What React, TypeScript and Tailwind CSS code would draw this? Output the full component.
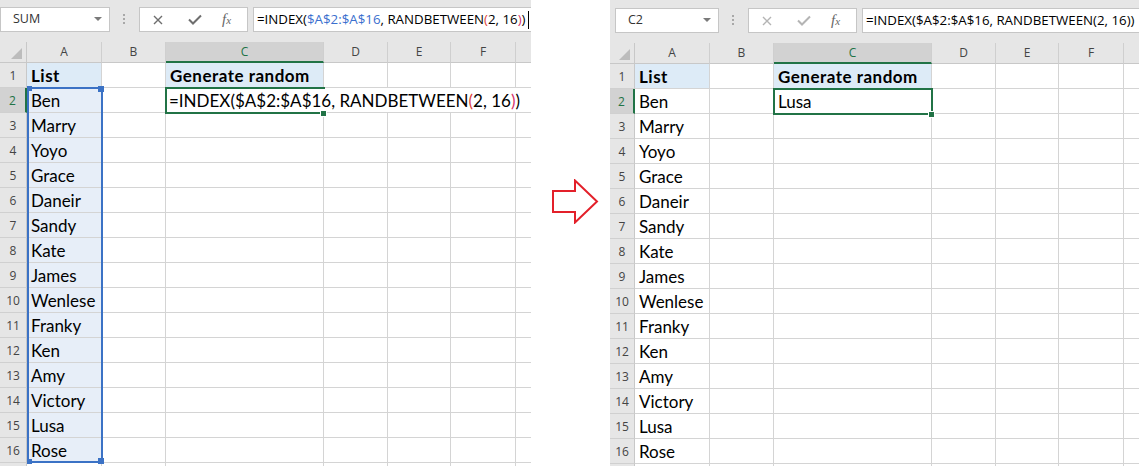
import React from "react";

const NAMES = [
  "Ben", "Marry", "Yoyo", "Grace", "Daneir", "Sandy", "Kate", "James",
  "Wenlese", "Franky", "Ken", "Amy", "Victory", "Lusa", "Rose",
];
const LETTERS = ["A", "B", "C", "D", "E", "F", "G"];

const cellFont = "font-['Lato',sans-serif]";
const uiFont = "font-['Open_Sans',sans-serif]";

function Toolbar({ right }: { right?: boolean }) {
  return (
    <div className={`h-[42px] shrink-0 flex items-start pt-[7px] ${right ? "pl-[5px]" : ""}`}>
      <div
        className={`${right ? "w-[104px]" : "w-[110px]"} shrink-0 h-[25px] bg-white border border-[#c6c6c6] flex items-center justify-between pl-[12px] pr-[7px] ${uiFont} text-[12.5px] text-[#333]`}
      >
        <span>{right ? "C2" : "SUM"}</span>
        <svg width="8" height="5" viewBox="0 0 8 5">
          <polygon points="0,0 8,0 4,4" fill="#7a7a7a" />
        </svg>
      </div>
      <div className="ml-[13px] mt-[7px] shrink-0 flex flex-col gap-[2px]">
        <div className="w-[2px] h-[2px] bg-[#a8a8a8]" />
        <div className="w-[2px] h-[2px] bg-[#a8a8a8]" />
        <div className="w-[2px] h-[2px] bg-[#a8a8a8]" />
      </div>
      <div className="ml-[14px] shrink-0 w-[109px] h-[25px] bg-white border border-[#c6c6c6] flex items-center">
        <svg className="ml-[13px]" width="10" height="10" viewBox="0 0 10 10">
          <path d="M1 1 L9 9 M9 1 L1 9" stroke={right ? "#b4b4b4" : "#6e6e6e"} strokeWidth="1.4" fill="none" />
        </svg>
        <svg className="ml-[25px]" width="14" height="11" viewBox="0 0 14 11">
          <path d="M1 5.5 L5 9.5 L13 1.5" stroke={right ? "#b4b4b4" : "#6e6e6e"} strokeWidth="2" fill="none" />
        </svg>
        <span className="ml-[20px] italic font-['Liberation_Serif',serif] text-[15px] text-[#666] leading-none">
          f<span className="text-[11px]">x</span>
        </span>
      </div>
      <div
        className={`ml-[5px] flex-1 min-w-0 h-[25px] bg-white border border-r-0 border-[#c6c6c6] flex items-center pl-[3px] whitespace-nowrap overflow-hidden ${uiFont} text-[13.3px] text-black`}
      >
        {right ? (
          <span>=INDEX($A$2:$A$16, RANDBETWEEN(2, 16))</span>
        ) : (
          <>
            <span>=INDEX(</span>
            <span className="text-[#3a6fce]">$A$2:$A$16</span>
            <span>, RANDBETWEEN</span>
            <span className="text-[#e0463b]">(</span>
            <span>2, 16</span>
            <span className="text-[#d6336c]">)</span>
            <span>)</span>
            <span className="inline-block w-px h-[18px] bg-black ml-[2px]" />
          </>
        )}
      </div>
    </div>
  );
}

function Panel({ right }: { right?: boolean }) {
  const widths = [
    right ? "w-[25px]" : "w-[27px]",
    "w-[75px]",
    "w-[64px]",
    "w-[158px]",
    "w-[64px]",
    "w-[63px]",
    "w-[65px]",
  ];
  const rows = Array.from({ length: 17 }, (_, i) => i + 1);
  const cOffset = right ? 163 : 165;

  return (
    <div
      className={`flex flex-col h-full shrink-0 overflow-hidden bg-[#e6e6e6] ${right ? "w-[529px] pt-px" : "w-[531px]"}`}
    >
      <Toolbar right={right} />
      <div className="relative flex-1 bg-white">
        {/* column header */}
        <div className={`flex h-[21px] bg-[#e6e6e6] ${uiFont} text-[12px] text-[#444]`}>
          <div className={`${widths[0]} shrink-0 h-full border-r border-b border-[#c8c8c8] flex items-start justify-end`}>
            <svg width="12" height="21" viewBox="0 0 12 21" className="mr-[3px]">
              <polygon points="11,6 11,17 0,17" fill="#bcbcbc" />
            </svg>
          </div>
          {LETTERS.map((l, i) => {
            const sel = l === "C";
            const last = i === LETTERS.length - 1;
            return (
              <div
                key={l}
                className={`${last ? "flex-1" : widths[i + 1]} shrink-0 h-full flex items-center justify-center ${
                  last ? "" : "border-r border-[#cfcfcf]"
                } ${sel ? "bg-[#d2d2d2] text-[#217346] border-b-2 border-b-[#217346]" : "border-b border-b-[#c8c8c8]"}`}
              >
                {last ? "" : l}
              </div>
            );
          })}
        </div>

        {rows.map((r) => {
          const sel = r === 2;
          return (
            <div key={r} className="flex h-[25px]">
              <div
                className={`${widths[0]} shrink-0 h-full flex items-center justify-center pt-[2px] ${uiFont} text-[12px] border-b border-[#d0d0d0] ${
                  sel
                    ? "bg-[#d2d2d2] text-[#217346] border-r-2 border-r-[#217346]"
                    : "bg-[#e6e6e6] text-[#444] border-r border-r-[#c8c8c8]"
                }`}
              >
                {r <= 16 ? r : ""}
              </div>
              {LETTERS.map((l, i) => {
                const last = i === LETTERS.length - 1;
                let text = "";
                let bold = false;
                let bg = "";
                if (r === 1 && l === "A") {
                  text = "List";
                  bold = true;
                  bg = "bg-[#ddebf7]";
                } else if (r === 1 && l === "C") {
                  text = "Generate random";
                  bold = true;
                  bg = "bg-[#ddebf7]";
                } else if (r >= 2 && r <= 16 && l === "A") {
                  text = NAMES[r - 2];
                  if (!right) bg = "bg-[#e7eef8]";
                } else if (right && r === 2 && l === "C") {
                  text = "Lusa";
                }
                return (
                  <div
                    key={l}
                    className={`${last ? "flex-1" : widths[i + 1]} shrink-0 h-full flex items-center pl-[4px] pt-[2px] whitespace-nowrap overflow-hidden border-b border-[#d4d4d4] ${
                      last ? "" : "border-r"
                    } ${bg} ${cellFont} text-[17px] text-black ${bold ? "font-bold tracking-[0.5px]" : ""}`}
                  >
                    {text}
                  </div>
                );
              })}
            </div>
          );
        })}

        {/* overlays */}
        {!right && (
          <>
            <div className="absolute left-[27px] top-[45px] w-[76px] h-[376px] border-2 border-[#3b72c5] z-10 pointer-events-none">
              <div className="absolute -left-[2px] -top-[3px] w-[5px] h-[5px] bg-[#3b72c5]" />
              <div className="absolute -right-[3px] -top-[3px] w-[6px] h-[6px] bg-[#3b72c5]" />
              <div className="absolute -left-[2px] -bottom-[3px] w-[5px] h-[5px] bg-[#3b72c5]" />
              <div className="absolute -right-[3px] -bottom-[3px] w-[6px] h-[6px] bg-[#3b72c5]" />
            </div>
            <div
              className={`absolute left-[167px] top-[46px] h-[24px] w-[349px] bg-white z-10 flex items-center pl-[2px] pt-[2px] whitespace-nowrap ${cellFont} text-[17px] text-black`}
            >
              <span>=INDEX($A$2:$A$16, RANDBETWEEN</span>
              <span className="text-[#e0463b]">(</span>
              <span>2, 16</span>
              <span className="text-[#d6336c]">)</span>
              <span>)</span>
            </div>
            <div
              className="absolute top-[45px] h-[27px] w-[160px] border-l-2 border-t-2 border-b-2 border-[#217346] z-20 pointer-events-none"
              style={{ left: cOffset }}
            />
          </>
        )}
        {right && (
          <div
            className="absolute top-[45px] h-[27px] w-[160px] border-2 border-[#217346] z-20 pointer-events-none"
            style={{ left: cOffset }}
          />
        )}
        <div
          className="absolute top-[68px] w-[7px] h-[7px] bg-[#217346] border border-white z-30"
          style={{ left: cOffset + 155 }}
        />
      </div>
    </div>
  );
}

export default function App() {
  return (
    <div className="w-[1139px] h-[466px] bg-white flex overflow-hidden">
      <Panel />
      <div className="w-[79px] shrink-0 pl-[21px] pt-[179px]">
        <svg width="47" height="45" viewBox="0 0 47 45">
          <polygon
            points="1,12 23,12 23,1.5 45,22.5 23,43.5 23,33 1,33"
            fill="white"
            stroke="#e3202a"
            strokeWidth="2"
            strokeLinejoin="miter"
          />
        </svg>
      </div>
      <Panel right />
    </div>
  );
}
